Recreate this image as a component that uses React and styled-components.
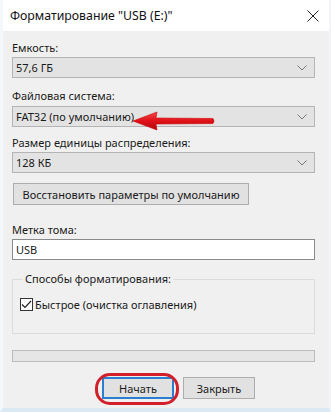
import React from 'react';
import styled, { createGlobalStyle } from 'styled-components';

const Global = createGlobalStyle`
  html, body { margin: 0; padding: 0; }
  body {
    width: 331px;
    height: 412px;
    overflow: hidden;
    font-family: "Noto Sans", "Open Sans", sans-serif;
    font-size: 11px;
    color: #1a1a1a;
    background: #eaf3fb;
  }
`;

const Window = styled.div`
  width: 331px;
  height: 412px;
  display: flex;
  flex-direction: column;
  box-sizing: border-box;
  border-left: 3px solid #f3f8fc;
  border-right: 2px solid #eef5fb;
  border-bottom: 4px solid #dbe9f5;
`;

const TitleBar = styled.div`
  height: 31px;
  flex: none;
  display: flex;
  align-items: center;
  justify-content: space-between;
  padding: 0 10px 0 7px;
  background: #fff;
  font-size: 12.3px;
  color: #111;
`;

const Body = styled.div`
  flex: 1;
  background: #f0f0f0;
  display: flex;
  flex-direction: column;
  padding: 0 14px 0 9px;
  position: relative;
  white-space: nowrap;
`;

const Label = styled.div`
  line-height: 16px;
  height: 16px;
  margin-top: ${p => p.$mt || 0}px;
`;

const Combo = styled.div`
  height: 21px;
  box-sizing: border-box;
  margin-top: ${p => p.$mt || 0}px;
  border: 1px solid #b4b4b4;
  background: #e3e3e3;
  display: flex;
  align-items: center;
  justify-content: space-between;
  padding: 0 7px 0 3px;
`;

const TextBox = styled.div`
  height: 21px;
  box-sizing: border-box;
  margin-top: ${p => p.$mt || 0}px;
  border: 1px solid #8a8a8a;
  background: #fff;
  display: flex;
  align-items: center;
  padding: 0 3px;
`;

const Button = styled.div`
  height: 22px;
  box-sizing: border-box;
  width: ${p => p.$w}px;
  margin-top: ${p => p.$mt || 0}px;
  margin-left: ${p => p.$ml || 0}px;
  border: ${p => (p.$default ? '2px solid #2a7fd0' : '1px solid #adadad')};
  background: #e1e1e1;
  display: flex;
  align-items: center;
  justify-content: center;
`;

const Group = styled.fieldset`
  margin: 0;
  margin-top: ${p => p.$mt}px;
  padding: 10px 8px 0 7px;
  height: 63px;
  box-sizing: border-box;
  border: 1px solid #dcdcdc;
  legend {
    padding: 0 2px;
    margin-left: 3px;
    line-height: 16px;
  }
`;

const CheckRow = styled.label`
  display: flex;
  align-items: center;
  gap: 2px;
`;

const CheckBox = styled.span`
  width: 13px;
  height: 13px;
  box-sizing: border-box;
  border: 1px solid #333;
  background: #fff;
  display: flex;
  align-items: center;
  justify-content: center;
`;

const Progress = styled.div`
  height: 12px;
  box-sizing: border-box;
  margin-top: ${p => p.$mt}px;
  border: 1px solid #bcbcbc;
  background: #e6e6e6;
`;

const ButtonRow = styled.div`
  display: flex;
  gap: 9px;
  margin-top: ${p => p.$mt}px;
  padding-left: 90px;
`;

const Highlight = styled.div`
  position: relative;
  &::after {
    content: '';
    position: absolute;
    left: -7px;
    right: -5px;
    top: -4px;
    bottom: -6px;
    border: 3px solid #d2202b;
    border-radius: 15px;
  }
`;

const Arrow = styled.svg`
  position: absolute;
  left: 126px;
  top: 79px;
`;

const Chevron = () => (
  <svg width="10" height="6" viewBox="0 0 10 6">
    <path d="M0.5 0.5 L5 5 L9.5 0.5" fill="none" stroke="#777" strokeWidth="1" />
  </svg>
);

const Select = ({ mt, children }) => (
  <Combo $mt={mt}>
    <span>{children}</span>
    <Chevron />
  </Combo>
);

export default function App() {
  return (
    <>
      <Global />
      <Window>
        <TitleBar>
          <span>Форматирование "USB (E:)"</span>
          <svg width="12" height="12" viewBox="0 0 12 12">
            <path d="M0.5 0.5 L11.5 11.5 M11.5 0.5 L0.5 11.5" stroke="#222" strokeWidth="1" />
          </svg>
        </TitleBar>
        <Body>
          <Label $mt={9}>Емкость:</Label>
          <Select mt={1}>57,6 ГБ</Select>
          <Label $mt={10}>Файловая система:</Label>
          <Select mt={2}>FAT32 (по умолчанию)</Select>
          <Label $mt={8}>Размер единицы распределения:</Label>
          <Select mt={1}>128 КБ</Select>
          <Button $w={236} $mt={10} $ml={1}>
            Восстановить параметры по умолчанию
          </Button>
          <Label $mt={17}>Метка тома:</Label>
          <TextBox $mt={1}>USB</TextBox>
          <Group $mt={11}>
            <legend>Способы форматирования:</legend>
            <CheckRow>
              <CheckBox>
                <svg width="11" height="9" viewBox="0 0 11 9">
                  <path d="M1 4.5 L4 7.5 L10 1" fill="none" stroke="#222" strokeWidth="1.2" />
                </svg>
              </CheckBox>
              Быстрое (очистка оглавления)
            </CheckRow>
          </Group>
          <Progress $mt={16} />
          <ButtonRow $mt={15}>
            <Highlight>
              <Button $w={72} $default>Начать</Button>
            </Highlight>
            <Button $w={72}>Закрыть</Button>
          </ButtonRow>
          <Arrow width="88" height="22" viewBox="0 0 88 22">
            <defs>
              <linearGradient id="ag" x1="0" y1="0" x2="0" y2="1">
                <stop offset="0" stopColor="#f04a4a" />
                <stop offset="0.5" stopColor="#e01018" />
                <stop offset="1" stopColor="#b00810" />
              </linearGradient>
            </defs>
            <path
              d="M4 11 L28 2 L27 8 L84 8.5 Q86 11 84 13.5 L27 14 L28 20 Z"
              fill="url(#ag)"
              stroke="#c00"
              strokeWidth="0.6"
              strokeLinejoin="round"
            />
          </Arrow>
        </Body>
      </Window>
    </>
  );
}
